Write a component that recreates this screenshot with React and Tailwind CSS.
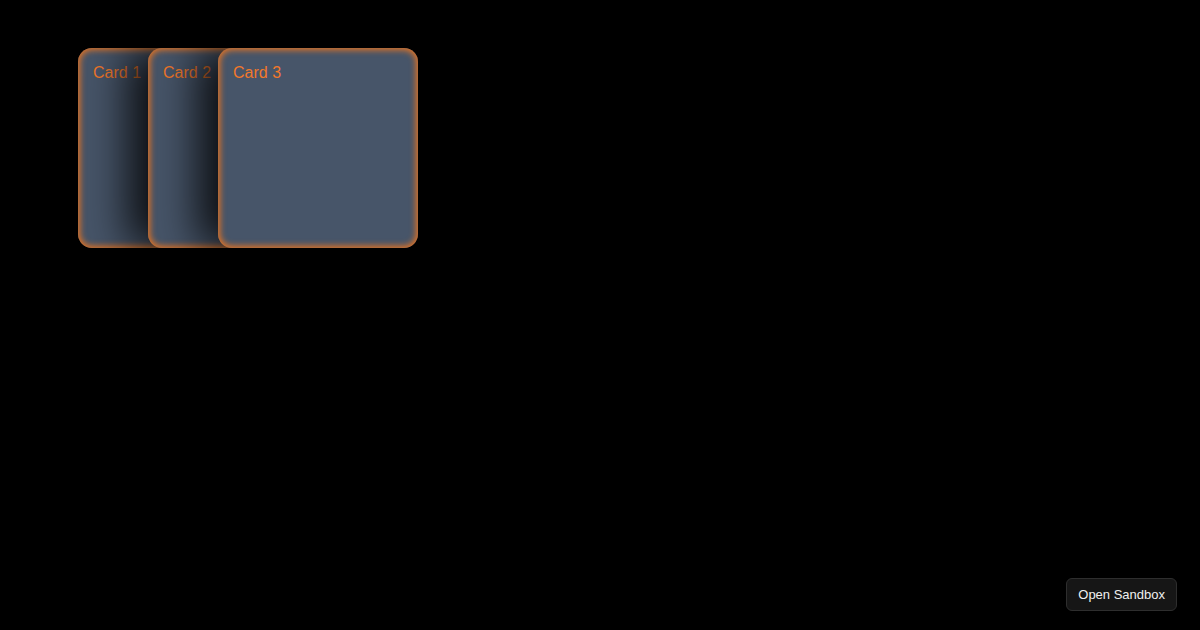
import React from 'react';

const cards = ['Card 1', 'Card 2', 'Card 3'];

function App() {
  return (
    <div className="relative h-[630px] w-[1200px] overflow-hidden bg-black" style={{ fontFamily: '"Liberation Sans", Arial, sans-serif' }}>
      <div className="flex pl-[78px] pt-[48px]">
        {cards.map((label, i) => (
          <div
            key={label}
            className={`relative h-[200px] w-[200px] shrink-0 rounded-[14px] bg-[#475569] px-[15px] pt-[13px] shadow-[inset_0_0_6px_2px_rgba(240,118,30,0.95),-20px_0_44px_rgba(0,0,0,0.85)] ${i > 0 ? '-ml-[130px]' : ''}`}
          >
            <span className="text-[16px] text-[#f2782a]">{label}</span>
          </div>
        ))}
      </div>
      <button className="absolute bottom-[19px] right-[23px] flex h-[33px] items-center rounded-md border border-[#2e2e2e] bg-[#161616] px-[11px] text-[13px] text-[#f0f0f0]">
        Open Sandbox
      </button>
    </div>
  );
}

export default App;
